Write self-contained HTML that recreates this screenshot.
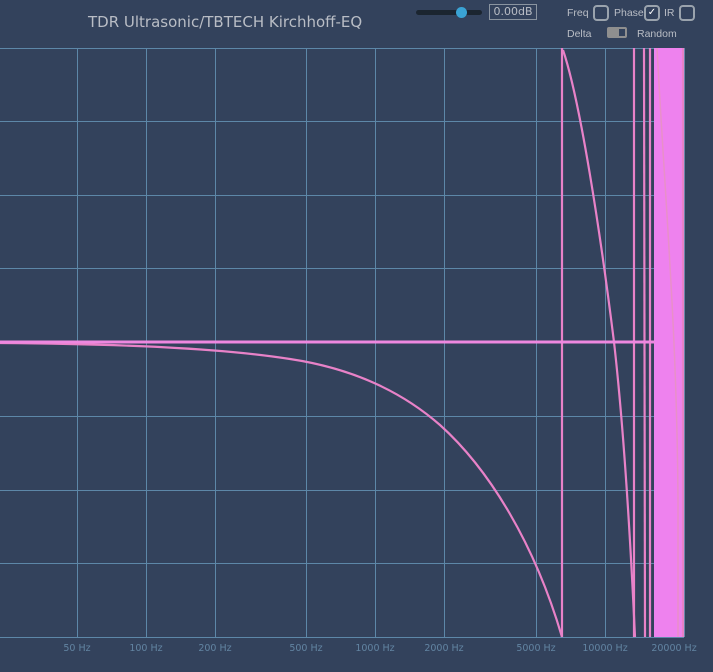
<!DOCTYPE html>
<html><head><meta charset="utf-8"><style>
html,body{margin:0;padding:0;width:713px;height:672px;background:#33425c;overflow:hidden;font-family:"Liberation Sans",sans-serif}
.t{position:absolute;color:#b9bdc5}
.cb{position:absolute;width:14px;height:14px;border:2px solid #9aa3ad;border-radius:4px;box-sizing:border-box}
</style></head><body>
<div class="t" style="left:88px;top:13px;font-size:15px;font-family:'DejaVu Sans',sans-serif">TDR Ultrasonic/TBTECH Kirchhoff-EQ</div>
<div style="position:absolute;left:416px;top:10px;width:66px;height:5px;border-radius:3px;background:#1b2530"></div>
<div style="position:absolute;left:456px;top:7px;width:11px;height:11px;border-radius:50%;background:#3aa3d4"></div>
<div style="position:absolute;left:489px;top:4px;width:48px;height:16px;border:1px solid #8a94a0;box-sizing:border-box;color:#b9bdc5;font-size:11px;line-height:14px;text-align:center;font-family:'DejaVu Sans',sans-serif">0.00dB</div>
<div class="t" style="left:567px;top:7px;font-size:10.5px">Freq</div>
<div class="cb" style="left:593px;top:5px;width:16px;height:16px"></div>
<div class="t" style="left:614px;top:7px;font-size:10.5px">Phase</div>
<div class="cb" style="left:644px;top:5px;width:16px;height:16px;color:#fff;font-size:10px;line-height:12px;text-align:center">✓</div>
<div class="t" style="left:664px;top:7px;font-size:10.5px">IR</div>
<div class="cb" style="left:679px;top:5px;width:16px;height:16px"></div>
<div class="t" style="left:567px;top:28px;font-size:10.5px">Delta</div>
<div style="position:absolute;left:607px;top:27px;width:20px;height:11px;border-radius:2px;background:#8f8f8f"><div style="position:absolute;right:2px;top:2px;width:6px;height:7px;background:#33425c"></div></div>
<div class="t" style="left:637px;top:28px;font-size:10.5px">Random</div>
<svg style="position:absolute;left:0;top:0" width="713" height="672">
<g stroke="#5d87a8" stroke-width="1" fill="none">
<line x1="0" y1="48.5" x2="684" y2="48.5"/>
<line x1="0" y1="121.5" x2="684" y2="121.5"/>
<line x1="0" y1="195.5" x2="684" y2="195.5"/>
<line x1="0" y1="268.5" x2="684" y2="268.5"/>
<line x1="0" y1="416.5" x2="684" y2="416.5"/>
<line x1="0" y1="490.5" x2="684" y2="490.5"/>
<line x1="0" y1="563.5" x2="684" y2="563.5"/>
<line x1="0" y1="637.5" x2="684" y2="637.5"/>
<line x1="77.5" y1="48" x2="77.5" y2="637"/>
<line x1="146.5" y1="48" x2="146.5" y2="637"/>
<line x1="215.5" y1="48" x2="215.5" y2="637"/>
<line x1="306.5" y1="48" x2="306.5" y2="637"/>
<line x1="375.5" y1="48" x2="375.5" y2="637"/>
<line x1="444.5" y1="48" x2="444.5" y2="637"/>
<line x1="536.5" y1="48" x2="536.5" y2="637"/>
<line x1="605.5" y1="48" x2="605.5" y2="637"/>
<line x1="684.5" y1="48" x2="684.5" y2="637"/>
</g>
<rect x="654" y="48" width="30" height="589" fill="#ee82ee"/>
<g stroke="#e882c8" stroke-width="2.2" fill="none" stroke-linejoin="round">
<path d="M0,343 C120,344 220,348 290,359 C350,368 400,390 440,425 C490,470 535,545 562,637"/>
<path d="M563,50 C580,100 600,230 614,342 C624,430 630,530 635,637"/>
<line x1="562" y1="48" x2="562" y2="637"/>
<line x1="634" y1="48" x2="634" y2="637"/>
<line x1="650" y1="48" x2="650" y2="637"/>
<line x1="644" y1="48" x2="645" y2="637"/>
<line x1="683" y1="48" x2="683" y2="637"/>
<path d="M657,48 C665,200 677,330 678,500 L678,637" stroke="#e890c8" stroke-width="1.5"/>
</g>
<line x1="0" y1="342" x2="655" y2="342" stroke="#ee88e0" stroke-width="3"/>
<g fill="#6284a2" font-size="9.5" text-anchor="middle" font-family="DejaVu Sans,Liberation Sans,sans-serif">
<text x="77" y="651">50 Hz</text>
<text x="146" y="651">100 Hz</text>
<text x="215" y="651">200 Hz</text>
<text x="306" y="651">500 Hz</text>
<text x="375" y="651">1000 Hz</text>
<text x="444" y="651">2000 Hz</text>
<text x="536" y="651">5000 Hz</text>
<text x="605" y="651">10000 Hz</text>
<text x="674" y="651">20000 Hz</text>
</g>
</svg>
</body></html>
